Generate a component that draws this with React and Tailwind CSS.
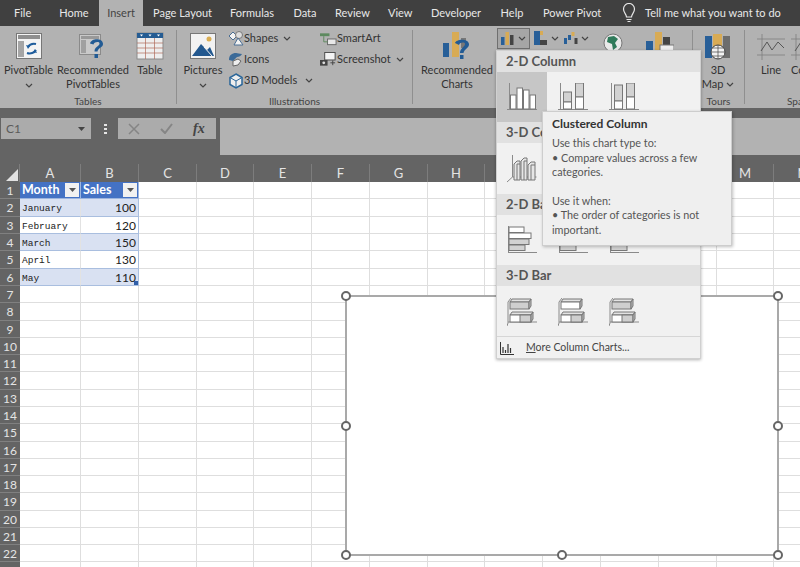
import React from "react";

const SANS = "font-['Lato','Roboto',sans-serif]";

const colWidths = [61, 58, 58, 57, 58, 58, 58, 57, 58, 58, 58, 58, 57, 58];
const colNames = ["A", "B", "C", "D", "E", "F", "G", "H", "I", "J", "K", "L", "M", "N"];
const tabs = [
  ["File", 14, 17], ["Home", 28, 30], ["Insert", 10, 44], ["Page Layout", 10, 58], ["Formulas", 19, 44],
  ["Data", 19, 24], ["Review", 18, 34], ["View", 19, 24], ["Developer", 19, 50], ["Help", 19, 24], ["Power Pivot", 19, 56],
];

function PivotIcon() {
  return (
    <svg width="28" height="28" viewBox="0 0 28 28">
      <rect x="1.5" y="1.5" width="25" height="25" fill="#f4f4f4" stroke="#777" />
      <rect x="3" y="3" width="22" height="4" fill="#8f8f8f" />
      <rect x="3" y="9" width="6" height="16" fill="#a5a5a5" />
      <path d="M21 12a7 6 0 0 0-8 3M12 21a7 6 0 0 0 9-3" fill="none" stroke="#1f5d9c" strokeWidth="2" />
      <path d="M11 13l2 4 2-3zM22 21l-2-4-2 3z" fill="#1f5d9c" />
    </svg>
  );
}
function RecPivotIcon() {
  return (
    <svg width="30" height="28" viewBox="0 0 30 28">
      <rect x="1.5" y="2.5" width="21" height="20" fill="#c9c9c9" stroke="#8a8a8a" />
      <rect x="3" y="4" width="18" height="3" fill="#999" />
      <rect x="3" y="8" width="5" height="13" fill="#a0a0a0" />
      <path d="M12 11.500c1-5 12-6 13 0 .5 4-5 4-5.500 8h-3c0-5 5-5 5-8 0-2-5-2-6 1z" fill="#225b94" />
      <rect x="16.500" y="22" width="3.500" height="4" fill="#225b94" />
    </svg>
  );
}
function TableIcon() {
  return (
    <svg width="28" height="28" viewBox="0 0 28 28">
      <rect x="1" y="1" width="26" height="26" fill="#eeeeee" stroke="#8a8a8a" />
      <rect x="1" y="1" width="26" height="5" fill="#255c93" />
      <path d="M4 2.500h3l-1.500 2zM12.500 2.500h3l-1.500 2zM21 2.500h3l-1.500 2z" fill="#fff" />
      <path d="M1 11h26M1 16h26M1 21h26M9.500 6v21M18.500 6v21" stroke="#b06a5a" strokeWidth="0.700" />
    </svg>
  );
}
function PictureIcon() {
  return (
    <svg width="26" height="27" viewBox="0 0 26 27">
      <rect x="0.500" y="0.500" width="25" height="25" fill="#f2f2f2" stroke="#777" />
      <circle cx="19" cy="6" r="2.500" fill="#d9ad52" />
      <path d="M2 23l9-12 6 6 3-3 4 9z" fill="#22588f" />
      <path d="M14 14l8 9" stroke="#f2f2f2" />
    </svg>
  );
}
function ShapesIcon() {
  return (
    <svg width="16" height="15" viewBox="0 0 16 15">
      <path d="M1 5l4-4 4 4-4 4z" fill="#f3f3f3" stroke="#4a6e94" />
      <circle cx="11" cy="4" r="3.500" fill="#dddddd" stroke="#777" />
      <path d="M6 14l4-7 5 7z" fill="#f3f3f3" stroke="#4a6e94" />
    </svg>
  );
}
function IconsIcon() {
  return (
    <svg width="16" height="15" viewBox="0 0 16 15">
      <path d="M1 8c0-5 3-7 7-7 2 0 3 1 6 1-1 2-3 3-5 3L5 9z" fill="#3b6a98" />
      <path d="M5 14V9l5-2 3 2-3 4z" fill="#eee" stroke="#666" />
    </svg>
  );
}
function CubeIcon() {
  return (
    <svg width="16" height="16" viewBox="0 0 16 16">
      <path d="M8 1l6 3.500v7L8 15l-6-3.500v-7z" fill="#eeeeee" stroke="#2a6699" strokeWidth="1.500" />
      <path d="M2 4.500L8 8l6-3.500M8 8v7" fill="none" stroke="#2a6699" />
    </svg>
  );
}
function SmartArtIcon() {
  return (
    <svg width="18" height="14" viewBox="0 0 18 14">
      <rect x="0" y="1" width="10" height="3" fill="#5d8a5f" />
      <rect x="8" y="7" width="9" height="6" fill="#e8e8e8" stroke="#666" />
      <path d="M4 4v6h4" fill="none" stroke="#5d8a5f" />
    </svg>
  );
}
function ScreenshotIcon() {
  return (
    <svg width="18" height="15" viewBox="0 0 18 15">
      <rect x="5" y="0" width="11" height="8" fill="#f4f4f4" stroke="#444" />
      <rect x="0" y="8" width="8" height="6" fill="#444" />
      <circle cx="4" cy="11" r="1.500" fill="#ddd" />
      <path d="M11 11h5M13.500 8.500v5" stroke="#444" />
    </svg>
  );
}
function Chevron({ className = "" }) {
  return (
    <svg width="8" height="5" viewBox="0 0 8 5" className={className}>
      <path d="M1 1l3 3 3-3" fill="none" stroke="#444" strokeWidth="1.200" />
    </svg>
  );
}
function ColumnBtn() {
  return (
    <svg width="13" height="13" viewBox="0 0 13 13">
      <rect x="0" y="5" width="3.500" height="8" fill="#285f98" />
      <rect x="4.500" y="0" width="3.500" height="13" fill="#d8ab55" />
      <rect x="9" y="3" width="3.500" height="10" fill="#444" />
    </svg>
  );
}
function HierBtn() {
  return (
    <svg width="14" height="14" viewBox="0 0 14 14">
      <rect x="0" y="0" width="6" height="14" fill="#285f98" />
      <rect x="6" y="9" width="7" height="5" fill="#444" />
      <rect x="6" y="0" width="3" height="4" fill="#d8ab55" />
    </svg>
  );
}
function WaterfallBtn() {
  return (
    <svg width="14" height="13" viewBox="0 0 14 13">
      <rect x="0" y="6" width="3" height="6" fill="#285f98" />
      <rect x="4" y="3" width="3" height="5" fill="#285f98" />
      <rect x="7.500" y="0" width="3" height="4" fill="#d8ab55" />
      <rect x="10.500" y="6" width="3" height="6" fill="#444" />
    </svg>
  );
}
function GlobeIcon() {
  return (
    <svg width="20" height="20" viewBox="0 0 20 20">
      <circle cx="10" cy="10" r="9" fill="#e9e9e9" stroke="#777" />
      <path d="M5 4l6-1 4 3-3 4 2 4-4 3-1-6-5-2z" fill="#2f7a5a" />
    </svg>
  );
}
function PivotChartIcon() {
  return (
    <svg width="28" height="20" viewBox="0 0 28 20">
      <rect x="0" y="9" width="7" height="11" fill="#285f98" />
      <rect x="9" y="0" width="7" height="20" fill="#d8ab55" />
      <rect x="17" y="5" width="7" height="15" fill="#444" />
      <rect x="14" y="13" width="14" height="7" fill="#eee" stroke="#777" />
    </svg>
  );
}
function RecChartIcon() {
  return (
    <svg width="28" height="28" viewBox="0 0 28 28">
      <rect x="0" y="11" width="6" height="14" fill="#285f98" />
      <rect x="9" y="0" width="7" height="25" fill="#d8ab55" />
      <rect x="18" y="6" width="5" height="10" fill="#777" />
      <path d="M12 11c1-4 13-5 14 1 .5 4-5 5-5.500 9h-3.500c0-5 5-6 5-9 0-2-5-2-6 1z" fill="#225b94" />
      <rect x="17" y="23" width="3.500" height="4" fill="#225b94" />
    </svg>
  );
}
function MapIcon() {
  return (
    <svg width="26" height="26" viewBox="0 0 26 26">
      <rect x="0" y="2" width="7" height="22" fill="#285f98" />
      <rect x="8" y="0" width="9" height="14" fill="#d8ab55" />
      <rect x="18" y="2" width="7" height="22" fill="#6d6d6d" />
      <circle cx="13" cy="18" r="7" fill="#f3f3f3" stroke="#444" />
      <path d="M6 18h14M13 11v14M8 14h10M8 22h10" stroke="#444" strokeWidth="0.700" />
    </svg>
  );
}
function LineIcon() {
  return (
    <svg width="28" height="26" viewBox="0 0 28 26" className="shrink-0">
      <path d="M0 5h28M0 21h28M5 0v26" stroke="#7d7d7d" strokeWidth="0.800" />
      <path d="M4 17l6-9 5 8 6-8 6 6" fill="none" stroke="#555" strokeWidth="1" />
    </svg>
  );
}

function BigBtn({ width, icon, lines, chevron }) {
  return (
    <div className="flex flex-col items-center shrink-0" style={{ width }}>
      <div className="h-[30px] flex items-end">{icon}</div>
      <div className="mt-[3px] text-[11px] leading-[14px] text-[#333] text-center whitespace-nowrap">
        {lines.map((l, i) => (
          <div key={i}>{l}</div>
        ))}
      </div>
      {chevron && <Chevron className="mt-[6px]" />}
    </div>
  );
}
function SmallBtn({ icon, label, chevron, chevGap = "ml-[5px]" }) {
  return (
    <div className="h-[21px] flex items-center text-[11px] text-[#333] whitespace-nowrap">
      <span className="w-[17px] flex justify-center">{icon}</span>
      <span>{label}</span>
      {chevron && <Chevron className={chevGap} />}
    </div>
  );
}
function Group({ width, label, children, last, labelClass = "text-center" }) {
  return (
    <div className={`relative shrink-0 h-[74px] mt-[3px] ${last ? "" : "border-r border-[#8f8f8f]"}`} style={{ width }}>
      <div className="flex h-[66px]">{children}</div>
      <div className={`absolute bottom-[-4px] left-0 right-0 text-[10px] leading-[13px] text-[#444] whitespace-nowrap ${labelClass}`}>{label}</div>
    </div>
  );
}

function Ribbon() {
  return (
    <div className="h-[82px] bg-[#b2b2b2] flex pt-[1px] overflow-hidden">
      <Group width={177} label="Tables">
        <BigBtn width={57} icon={<PivotIcon />} lines={["PivotTable"]} chevron />
        <BigBtn width={72} icon={<RecPivotIcon />} lines={["Recommended", "PivotTables"]} />
        <BigBtn width={42} icon={<TableIcon />} lines={["Table"]} />
      </Group>
      <Group width={236} label="Illustrations">
        <div className="ml-[5px] flex">
          <BigBtn width={42} icon={<PictureIcon />} lines={["Pictures"]} chevron />
          <div className="ml-[3px] -mt-[2px] w-[93px] shrink-0">
            <SmallBtn icon={<ShapesIcon />} label="Shapes" chevron />
            <SmallBtn icon={<IconsIcon />} label="Icons" />
            <SmallBtn icon={<CubeIcon />} label="3D Models" chevron chevGap="ml-[8px]" />
          </div>
          <div className="-mt-[2px] shrink-0">
            <SmallBtn icon={<SmartArtIcon />} label="SmartArt" />
            <SmallBtn icon={<ScreenshotIcon />} label="Screenshot" chevron />
          </div>
        </div>
      </Group>
      <Group width={280} label="">
        <div className="ml-[8px] flex">
          <BigBtn width={72} icon={<RecChartIcon />} lines={["Recommended", "Charts"]} />
          <div className="ml-[4px] -mt-[2px] flex items-start shrink-0">
            <div className="w-[33px] h-[21px] border border-[#6f6f6f] bg-[#a6a6a6] flex items-center justify-center gap-[4px]">
              <ColumnBtn />
              <Chevron />
            </div>
            <div className="ml-[4px] h-[20px] flex items-center gap-[3px]"><HierBtn /><Chevron /></div>
            <div className="ml-[5px] h-[20px] flex items-center gap-[3px]"><WaterfallBtn /><Chevron /></div>
          </div>
          <div className="ml-[14px] mt-[3px] shrink-0"><GlobeIcon /></div>
          <div className="ml-[23px] mt-[2px] shrink-0"><PivotChartIcon /></div>
        </div>
      </Group>
      <Group width={52} label="Tours">
        <BigBtn
          width={50}
          icon={<MapIcon />}
          lines={["3D", <span key="m" className="inline-flex items-center gap-[3px]">Map <Chevron /></span>]}
        />
      </Group>
      <Group width={60} label="Spa" last labelClass="pl-[42px]">
        <div className="ml-[12px] flex shrink-0">
          <BigBtn width={28} icon={<LineIcon />} lines={["Line"]} />
          <div className="ml-[6px] shrink-0 w-[14px] overflow-hidden">
            <div className="h-[30px] flex items-end"><LineIcon /></div>
            <div className="mt-[3px] text-[11px] leading-[14px] text-[#333]">Co</div>
          </div>
        </div>
      </Group>
    </div>
  );
}

function FormulaBar() {
  return (
    <div className="h-[56px] bg-[#646464] relative">
      <div className="flex pt-[10px] items-start">
        <div className="ml-[1px] w-[90px] h-[21px] bg-[#ababab] flex items-center justify-between pl-[5px] pr-[6px] text-[12px] text-[#5b5b5b]">
          C1
          <svg width="7" height="4" viewBox="0 0 7 4"><path d="M0 0h7L3.500 4z" fill="#444" /></svg>
        </div>
        <div className="ml-[13px] w-[3px] h-[21px] flex flex-col justify-center gap-[2px]">
          <span className="w-[3px] h-[2px] bg-[#e5e5e5]" />
          <span className="w-[3px] h-[2px] bg-[#e5e5e5]" />
          <span className="w-[3px] h-[2px] bg-[#e5e5e5]" />
        </div>
        <div className="ml-[11px] w-[98px] h-[21px] bg-[#ababab] flex items-center text-[#7f7f7f]">
          <svg width="12" height="12" viewBox="0 0 12 12" className="ml-[10px]"><path d="M1 1l10 10M11 1L1 11" stroke="#858585" strokeWidth="1.500" /></svg>
          <svg width="13" height="11" viewBox="0 0 13 11" className="ml-[20px]"><path d="M1 6l4 4 7-9" fill="none" stroke="#858585" strokeWidth="2" /></svg>
          <span className="ml-[20px] font-['Liberation_Serif',serif] italic font-bold text-[14px] text-[#444]">fx</span>
        </div>
        <div className="ml-[4px] flex-1 h-[37px] bg-[#b2b2b2]" />
      </div>
    </div>
  );
}

function Sheet() {
  const rows = Array.from({ length: 23 }, (_, i) => i + 1);
  const data = {
    1: ["Month", "Sales"], 2: ["January", "100"], 3: ["February", "120"], 4: ["March", "150"], 5: ["April", "130"], 6: ["May", "110"],
  };
  const tall = [2, 5, 8, 12, 15, 19];
  return (
    <div className="bg-white">
      <div className="h-[18px] bg-[#646464] flex">
        <div className="w-[20px] shrink-0 relative border-r border-[#7d7d7d]">
          <svg width="12" height="12" viewBox="0 0 12 12" className="absolute right-[1px] bottom-[1px]"><path d="M12 0v12H0z" fill="#e2e2e2" /></svg>
        </div>
        {colNames.map((c, i) => (
          <div
            key={c}
            className="shrink-0 border-r border-[#7d7d7d] text-[#e4e4e4] text-[13px] leading-[18px] text-center"
            style={{ width: colWidths[i] }}
          >
            {c}
          </div>
        ))}
      </div>
      {rows.map((r) => {
        const banded = r === 2 || r === 4 || r === 6;
        const d = data[r];
        return (
          <div key={r} className="flex" style={{ height: tall.includes(r) ? 18 : 17 }}>
            <div className="w-[20px] shrink-0 bg-[#646464] border-b border-[#808080] text-[#e4e4e4] text-[12px] leading-[17px] text-center">{r}</div>
            {colWidths.map((w, i) => {
              const inTable = d && i < 2;
              if (inTable && r === 1) {
                return (
                  <div key={i} className="shrink-0 bg-[#4472c4] border-r border-b border-[#9db5de] flex items-center justify-between pl-[2px] pr-[1px] font-bold text-[12.500px] text-white" style={{ width: w }}>
                    {d[i]}
                    <span className="w-[14px] h-[14px] bg-[#f1f1f1] flex items-center justify-center">
                      <svg width="7" height="4" viewBox="0 0 7 4"><path d="M0 0h7L3.500 4z" fill="#555" /></svg>
                    </span>
                  </div>
                );
              }
              if (inTable) {
                return (
                  <div
                    key={i}
                    className={`relative shrink-0 border-b border-[#a9bedf] ${i === 1 ? "border-r text-right pr-[2px] text-[12px] leading-[17px] text-[#222]" : "border-r border-r-[#e2e2e2] font-['Liberation_Mono',monospace] text-[9.500px] leading-[20px] pl-[2px] text-[#222]"} ${banded ? "bg-[#d9e1f2]" : "bg-white"}`}
                    style={{ width: w }}
                  >
                    {d[i]}
                    {r === 6 && i === 1 && <span className="absolute right-0 bottom-0 w-[4px] h-[4px] bg-[#2f5ea8]" />}
                  </div>
                );
              }
              return <div key={i} className="shrink-0 border-r border-b border-[#dedede]" style={{ width: w }} />;
            })}
          </div>
        );
      })}
    </div>
  );
}

function Bars({ heights }) {
  return (
    <svg width="30" height="28" viewBox="0 0 30 28">
      <path d="M2.500 0v27M0 26.500h30" stroke="#8a8a8a" />
      {heights.map((h, i) => (
        <rect key={i} x={3.500 + i * 6.500} y={26 - h} width="5.500" height={h} fill="#fff" stroke="#777" />
      ))}
    </svg>
  );
}
function Stacked({ full }) {
  const cols = full ? [[16, 8], [14, 12]] : [[10, 7], [14, 12]];
  return (
    <svg width="30" height="28" viewBox="0 0 30 28">
      <path d="M2.500 0v27M0 26.500h30" stroke="#8a8a8a" />
      {cols.map(([a, b], i) => (
        <g key={i}>
          <rect x={5.500 + i * 12} y={26 - a - b} width="8" height={a} fill="#d2d2d2" stroke="#777" />
          <rect x={5.500 + i * 12} y={26 - b} width="8" height={b} fill="#fff" stroke="#777" />
        </g>
      ))}
    </svg>
  );
}
function Col3D() {
  return (
    <svg width="30" height="28" viewBox="0 0 30 28">
      <path d="M5.500 0v22L0 27M5.500 22h24" fill="none" stroke="#8a8a8a" />
      <path d="M7 25V9l3-3h3v19zM14 25V6l3-3h3v22zM21 25V10l3-3h4v18z" fill="#e6e6e6" stroke="#777" />
      <path d="M10 25V9h3M17 25V6h3M24 25V10h4" fill="none" stroke="#777" />
    </svg>
  );
}
function BarH() {
  return (
    <svg width="30" height="28" viewBox="0 0 30 28">
      <path d="M1.500 0v27M1 26.500h29" stroke="#8a8a8a" />
      {[[15, 1], [22, 7], [20, 13], [16, 19]].map(([w, y], i) => (
        <rect key={i} x="2" y={y} width={w} height="5.500" fill={i > 1 ? "#d2d2d2" : "#fff"} stroke="#777" />
      ))}
    </svg>
  );
}
function Bar3D({ shade }) {
  return (
    <svg width="30" height="30" viewBox="0 0 30 30">
      <path d="M4 2L1 6v21l-1 3M1 26h29" fill="none" stroke="#8a8a8a" />
      <path d="M3 6l2-3h19l-2 3z" fill="#e3e3e3" stroke="#777" />
      <rect x="3" y="6" width="19" height="7" fill={shade ? "#cfcfcf" : "#fff"} stroke="#777" />
      <path d="M22 6l2-3v7l-2 3z" fill="#bbb" stroke="#777" />
      <path d="M3 19l2-3h21l-2 3z" fill="#e3e3e3" stroke="#777" />
      <rect x="3" y="19" width="21" height="7" fill="#fff" stroke="#777" />
      <rect x="13" y="19" width="11" height="7" fill="#cfcfcf" stroke="#777" />
      <path d="M24 19l2-3v7l-2 3z" fill="#bbb" stroke="#777" />
    </svg>
  );
}

function SectionHead({ children }) {
  return <div className="h-[21px] bg-[#e1e1e1] pl-[9px] font-bold text-[13px] leading-[20px] text-[#555]">{children}</div>;
}
function IconRow({ children, h = 51 }) {
  return (
    <div className="flex" style={{ height: h }}>
      {children.map((c, i) => (
        <div key={i} className={`w-[50px] flex items-center justify-center ${i ? "ml-[1px]" : ""}`}>{c}</div>
      ))}
    </div>
  );
}

function ChartMenu() {
  return (
    <div className="absolute left-[496px] top-[50px] w-[205px] h-[309px] bg-[#f1f1f1] border border-[#d0d0d0] shadow-[0_1px_3px_rgba(0,0,0,0.3)] z-20">
      <SectionHead>2-D Column</SectionHead>
      <div className="flex h-[50px]">
        <div className="w-[50px] bg-[#c6c6c6] flex items-center justify-center"><Bars heights={[14, 21, 19, 14]} /></div>
        <div className="w-[50px] ml-[1px] flex items-center justify-center"><Stacked /></div>
        <div className="w-[50px] ml-[1px] flex items-center justify-center"><Stacked full /></div>
      </div>
      <SectionHead>3-D Column</SectionHead>
      <IconRow>{[<Col3D key="a" />]}</IconRow>
      <SectionHead>2-D Bar</SectionHead>
      <IconRow h={50}>{[<BarH key="a" />, <BarH key="b" />, <BarH key="c" />]}</IconRow>
      <SectionHead>3-D Bar</SectionHead>
      <IconRow h={50}>{[<Bar3D key="a" shade />, <Bar3D key="b" />, <Bar3D key="c" shade />]}</IconRow>
      <div className="border-t border-[#d6d6d6] h-[23px] flex items-center text-[10.500px] text-[#444]">
        <svg width="14" height="13" viewBox="0 0 14 13" className="ml-[3px]">
          <path d="M.5 0v12.500H14" fill="none" stroke="#333" />
          <path d="M3 11V5M5.500 11V8M8 11V2M10.500 11V6" stroke="#333" strokeWidth="1.200" />
        </svg>
        <span className="ml-[12px]"><span className="underline">M</span>ore Column Charts...</span>
      </div>
    </div>
  );
}

function Tooltip() {
  return (
    <div className="absolute left-[542px] top-[111px] w-[190px] h-[135px] bg-[#efefef] border border-[#cdcdcd] shadow-[1px_1px_3px_rgba(0,0,0,0.25)] z-30 pl-[9px] pt-[5px] text-[10.800px] leading-[14.400px] text-[#555]">
      <div className="font-bold text-[#333] text-[12px] mb-[5px]">Clustered Column</div>
      <div>Use this chart type to:</div>
      <div>• Compare values across a few</div>
      <div>categories.</div>
      <div className="h-[14.400px]" />
      <div>Use it when:</div>
      <div>• The order of categories is not</div>
      <div>important.</div>
    </div>
  );
}

function Handle({ pos }) {
  return <span className={`absolute w-[10px] h-[10px] rounded-full bg-white border-2 border-[#666] ${pos}`} />;
}
function ChartObject() {
  return (
    <div className="absolute left-[345px] top-[295px] w-[434px] h-[261px] bg-white border-2 border-[#a9a9a9] z-10">
      <Handle pos="-left-[6px] -top-[6px]" />
      <Handle pos="-right-[6px] -top-[6px]" />
      <Handle pos="-left-[6px] top-[124px]" />
      <Handle pos="-right-[6px] top-[124px]" />
      <Handle pos="-left-[6px] -bottom-[6px]" />
      <Handle pos="left-[210px] -bottom-[6px]" />
      <Handle pos="-right-[6px] -bottom-[6px]" />
    </div>
  );
}

export default function App() {
  return (
    <div className={`relative w-[800px] h-[567px] overflow-hidden bg-white ${SANS}`}>
      <div className="h-[26px] bg-[#404040] flex text-[11px] leading-[26px] text-[#e8e8e8]">
        {tabs.map(([t, ml, w], i) => (
          <div
            key={t}
            className={`shrink-0 text-center whitespace-nowrap ${t === "Insert" ? "bg-[#b2b2b2] text-[#444]" : ""}`}
            style={{ width: w, marginLeft: i === 0 ? 14 : ml }}
          >
            {t}
          </div>
        ))}
        <svg width="16" height="20" viewBox="0 0 16 20" className="ml-[22px] mt-[3px] shrink-0">
          <path d="M5.500 14c0-3-3-4-3-8a5.500 5.500 0 0 1 11 0c0 4-3 5-3 8zM5.500 16.500h5M6.500 18.500h3" fill="none" stroke="#e8e8e8" strokeWidth="1.200" />
        </svg>
        <div className="ml-[8px] whitespace-nowrap">Tell me what you want to do</div>
      </div>
      <Ribbon />
      <FormulaBar />
      <Sheet />
      <ChartObject />
      <ChartMenu />
      <Tooltip />
    </div>
  );
}
